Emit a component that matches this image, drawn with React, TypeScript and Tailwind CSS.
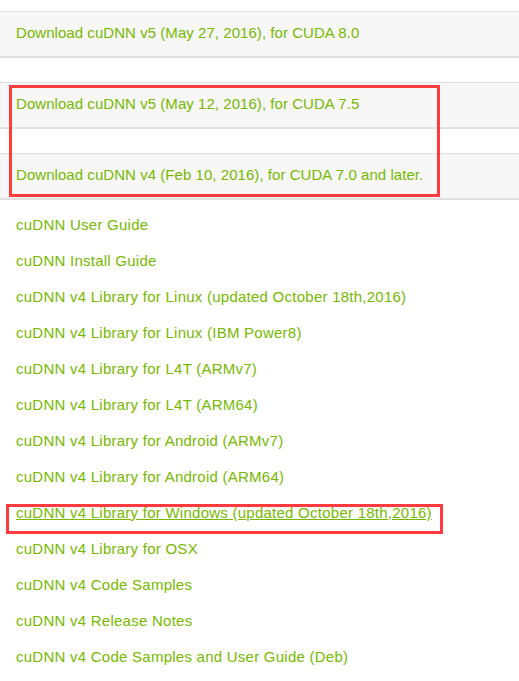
import React from "react";

const bands = [
  "Download cuDNN v5 (May 27, 2016), for CUDA 8.0",
  "Download cuDNN v5 (May 12, 2016), for CUDA 7.5",
  "Download cuDNN v4 (Feb 10, 2016), for CUDA 7.0 and later.",
];

const links = [
  "cuDNN User Guide",
  "cuDNN Install Guide",
  "cuDNN v4 Library for Linux (updated October 18th,2016)",
  "cuDNN v4 Library for Linux (IBM Power8)",
  "cuDNN v4 Library for L4T (ARMv7)",
  "cuDNN v4 Library for L4T (ARM64)",
  "cuDNN v4 Library for Android (ARMv7)",
  "cuDNN v4 Library for Android (ARM64)",
  "cuDNN v4 Library for Windows (updated October 18th,2016)",
  "cuDNN v4 Library for OSX",
  "cuDNN v4 Code Samples",
  "cuDNN v4 Release Notes",
  "cuDNN v4 Code Samples and User Guide (Deb)",
];

export default function App() {
  return (
    <div
      className="relative w-[519px] min-h-[681px] bg-white pt-[11px] text-[15px] text-[#76b900]"
      style={{ fontFamily: '"Liberation Sans", Arial, sans-serif' }}
    >
      <div className="flex flex-col gap-6">
        {bands.map((b) => (
          <div
            key={b}
            className="h-[47px] border-t border-b-2 border-[#e0e0e0] bg-[#f7f7f7] pl-4 leading-[42px] tracking-[0.05px]"
          >
            {b}
          </div>
        ))}
      </div>
      <ul className="mt-[7px] flex flex-col tracking-[0.25px]">
        {links.map((l, i) => (
          <li key={l} className="relative h-9 pl-4 leading-9">
            <span className={i === 8 ? "underline" : ""}>{l}</span>
            {i === 8 && (
              <div className="absolute left-[6px] top-[9px] h-[30px] w-[437px] border-[3px] border-[#ff3b3f]" />
            )}
          </li>
        ))}
      </ul>
      <div className="absolute left-[9px] top-[85px] h-[112px] w-[431px] border-[3px] border-[#ff3b3f]" />
    </div>
  );
}
